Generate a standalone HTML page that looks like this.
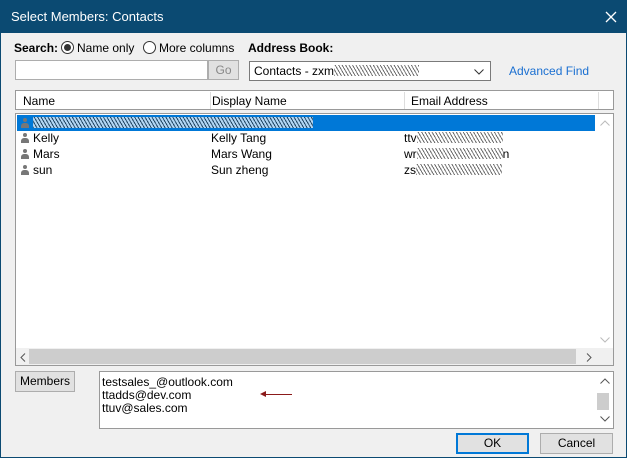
<!DOCTYPE html>
<html><head><style>
*{box-sizing:border-box;margin:0;padding:0}
body{width:627px;height:458px;background:#fff;font-family:"Liberation Sans",sans-serif;font-size:12px;color:#000;position:relative;overflow:hidden}
.win{position:absolute;left:0;top:0;width:627px;height:458px;background:#f0f0f0;border:1px solid #0b4a72}
.title{position:absolute;left:0;top:0;width:627px;height:32px;background:#0b4a72;color:#fff;font-size:13px;line-height:32px;padding-left:10px}
.a{position:absolute;white-space:nowrap}
.box{position:absolute;background:#fff;border:1px solid #adadad}
.btn{position:absolute;background:#e1e1e1;border:1px solid #adadad;text-align:center}
.radio{display:inline-block;width:13px;height:13px;border:1px solid #333;border-radius:50%;vertical-align:-2px;margin-right:3px;position:relative;background:#fff}
.radio.on::after{content:"";position:absolute;left:2px;top:2px;width:7px;height:7px;border-radius:50%;background:#333}
.hatch{display:inline-block;height:11px;background:repeating-linear-gradient(60deg,#333 0 1px,#fff 1px 3px);vertical-align:-1px;opacity:.7}
.p{display:inline-block;width:8px;height:10px;position:relative;margin-right:4px;vertical-align:-1px}
.p::before{content:"";position:absolute;left:2px;top:0;width:4px;height:4px;border-radius:50%;background:#777}
.p::after{content:"";position:absolute;left:0;top:5px;width:8px;height:5px;border-radius:3px 3px 0 0;background:#777}
</style></head><body>
<div class="win">
<div class="title">Select Members: Contacts</div>
<svg style="position:absolute;left:604px;top:10px" width="12" height="12"><path d="M1 1L11 11M11 1L1 11" stroke="#fff" stroke-width="1.3"/></svg>
<div class="a" style="left:13px;top:40px;font-weight:bold">Search:</div>
<div class="a" style="left:60px;top:40px"><span class="radio on"></span>Name only</div>
<div class="a" style="left:142px;top:40px"><span class="radio"></span>More columns</div>
<div class="a" style="left:247px;top:40px;font-weight:bold">Address Book:</div>
<div class="box" style="left:14px;top:59px;width:193px;height:20px"></div>
<div class="btn" style="left:207px;top:59px;width:31px;height:20px;color:#888;line-height:18px">Go</div>
<div class="box" style="left:248px;top:60px;width:242px;height:20px;border-color:#7a7a7a;padding-left:4px;line-height:18px">Contacts - zxm<span class="hatch" style="width:85px"></span><svg style="position:absolute;right:6px;top:7px" width="10" height="6"><path d="M0.5 0.5L5 5L9.5 0.5" stroke="#333" fill="none"/></svg></div>
<div class="a" style="left:508px;top:63px;color:#1a6fd1">Advanced Find</div>
<div class="box" style="left:14px;top:89px;width:599px;height:20px;border-color:#999"></div>
<div class="a" style="left:22px;top:93px">Name</div>
<div style="position:absolute;left:209px;top:91px;width:1px;height:17px;background:#ddd"></div>
<div class="a" style="left:211px;top:93px">Display Name</div>
<div style="position:absolute;left:403px;top:91px;width:1px;height:17px;background:#ddd"></div>
<div class="a" style="left:410px;top:93px">Email Address</div>
<div style="position:absolute;left:597px;top:91px;width:1px;height:17px;background:#ddd"></div>
<div class="box" style="left:14px;top:112px;width:599px;height:253px;border-color:#999"></div>
<div style="position:absolute;left:16px;top:114px;width:578px;height:16px;background:#0078d7"></div>
<div class="a" style="left:20px;top:115px"><span class="p"></span><span class="hatch" style="width:280px"></span></div>
<div class="a" style="left:20px;top:130px"><span class="p"></span>Kelly</div>
<div class="a" style="left:210px;top:130px">Kelly Tang</div>
<div class="a" style="left:403px;top:130px">ttv<span class="hatch" style="width:86px"></span></div>
<div class="a" style="left:20px;top:146px"><span class="p"></span>Mars</div>
<div class="a" style="left:210px;top:146px">Mars Wang</div>
<div class="a" style="left:403px;top:146px">wr<span class="hatch" style="width:86px"></span>n</div>
<div class="a" style="left:20px;top:162px"><span class="p"></span>sun</div>
<div class="a" style="left:210px;top:162px">Sun zheng</div>
<div class="a" style="left:403px;top:162px">zs<span class="hatch" style="width:86px"></span></div>
<svg style="position:absolute;left:599px;top:119px" width="10" height="6"><path d="M0.5 5.5L5 1L9.5 5.5" stroke="#bbb" fill="none"/></svg>
<svg style="position:absolute;left:599px;top:336px" width="10" height="6"><path d="M0.5 0.5L5 5L9.5 0.5" stroke="#bbb" fill="none"/></svg>
<div style="position:absolute;left:15px;top:347px;width:597px;height:17px;background:#f0f0f0"></div>
<div style="position:absolute;left:28px;top:348px;width:547px;height:15px;background:#cdcdcd"></div>
<svg style="position:absolute;left:19px;top:352px" width="6" height="9"><path d="M5 0.5L1 4.5L5 8.5" stroke="#555" fill="none"/></svg>
<svg style="position:absolute;left:585px;top:352px" width="6" height="9"><path d="M1 0.5L5 4.5L1 8.5" stroke="#555" fill="none"/></svg>
<div class="btn" style="left:14px;top:370px;width:60px;height:21px;line-height:19px">Members</div>
<div class="box" style="left:98px;top:370px;width:515px;height:58px;border-color:#999"></div>
<div class="a" style="left:101px;top:374px">testsales_@outlook.com</div>
<div class="a" style="left:101px;top:387px">ttadds@dev.com</div>
<div class="a" style="left:101px;top:400px">ttuv@sales.com</div>
<div style="position:absolute;left:261px;top:393px;width:30px;height:1px;background:#8b1a1a"></div>
<div style="position:absolute;left:259px;top:390px;border:3px solid transparent;border-right:6px solid #8b1a1a;border-left:0"></div>
<svg style="position:absolute;left:599px;top:377px" width="10" height="6"><path d="M0.5 5.5L5 1L9.5 5.5" stroke="#555" fill="none"/></svg>
<div style="position:absolute;left:596px;top:392px;width:12px;height:17px;background:#cdcdcd"></div>
<svg style="position:absolute;left:599px;top:415px" width="10" height="6"><path d="M0.5 0.5L5 5L9.5 0.5" stroke="#555" fill="none"/></svg>
<div class="btn" style="left:455px;top:432px;width:73px;height:21px;border:2px solid #0078d7;line-height:17px">OK</div>
<div class="btn" style="left:539px;top:432px;width:73px;height:21px;line-height:19px">Cancel</div>
</div>
</body></html>
